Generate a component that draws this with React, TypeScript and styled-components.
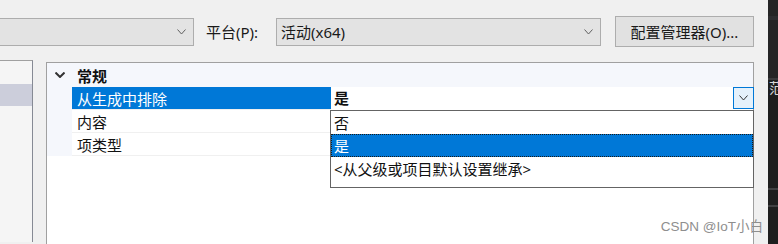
import styled, { createGlobalStyle } from "styled-components";

const GlobalStyle = createGlobalStyle`
  html, body {
    margin: 0;
    padding: 0;
  }
  body {
    background: #f0f0f0;
    font-family: "Noto Sans", "Noto Sans CJK SC", sans-serif;
    color: #1e1e1e;
  }
`;

const Screen = styled.div`
  width: 778px;
  height: 244px;
  overflow: hidden;
  display: flex;
  position: relative;
`;

const Main = styled.div`
  width: 768px;
  display: flex;
  flex-direction: column;
`;

const Toolbar = styled.div`
  height: 62px;
  box-sizing: border-box;
  padding-top: 16px;
  display: flex;
  align-items: flex-start;
`;

const Combo = styled.div<{ $width: number; $first?: boolean }>`
  width: ${(p) => p.$width}px;
  height: 28px;
  margin-top: 2px;
  margin-left: ${(p) => (p.$first ? "-1px" : "0")};
  box-sizing: border-box;
  border: 1px solid #adadad;
  background: #e3e3e3;
  display: flex;
  align-items: center;
  justify-content: space-between;
  padding: 0 7px 0 4px;
  font-size: 15px;
  line-height: 26px;
  color: #1a1a1a;
`;

const Label = styled.div`
  width: 70px;
  margin-left: 12px;
  margin-top: 2px;
  height: 28px;
  line-height: 28px;
  font-size: 15px;
  color: #1a1a1a;
`;

const Button = styled.div`
  width: 139px;
  height: 31px;
  margin-left: 14px;
  box-sizing: border-box;
  border: 1px solid #adadad;
  background: #e1e1e1;
  display: flex;
  align-items: center;
  justify-content: center;
  font-size: 15px;
  color: #1a1a1a;
`;

const Content = styled.div`
  flex: 1;
  display: flex;
  align-items: flex-start;
`;

const LeftPanel = styled.div`
  width: 33px;
  height: 182px;
  box-sizing: border-box;
  border-top: 1px solid #a0a0a0;
  border-right: 1px solid #868a94;
  background: #f5f5f5;
  padding-top: 23px;
`;

const LeftItem = styled.div`
  height: 22px;
  background: #cccedb;
`;

const Grid = styled.div`
  position: relative;
  margin-left: 13px;
  margin-top: 2px;
  width: 708px;
  height: 182px;
  box-sizing: border-box;
  border: 1px solid #a0a0a0;
  border-bottom: none;
  background: #ffffff;
`;

const CategoryRow = styled.div`
  height: 24px;
  background: #f5f7fc;
  display: flex;
  align-items: center;
  font-size: 15px;
  font-weight: 700;
  color: #111;
`;

const Expander = styled.div`
  width: 30px;
  display: flex;
  justify-content: center;
  padding-right: 4px;
  box-sizing: border-box;
`;

const Rows = styled.div`
  display: grid;
  grid-template-columns: 25px 259px 1fr;
`;

const Margin = styled.div`
  background: #f5f7fc;
  height: 23px;
`;

const NameCell = styled.div<{ $selected?: boolean }>`
  height: 23px;
  box-sizing: border-box;
  border-bottom: 1px solid #f0f0f0;
  background: #fff;
  font-size: 15px;
  line-height: 22px;
  color: #111;
  & > span {
    display: block;
    box-sizing: border-box;
    height: 22px;
    padding: 1px 0 0 5px;
    background: ${(p) => (p.$selected ? "#0078d7" : "transparent")};
    color: ${(p) => (p.$selected ? "#ffffff" : "#111")};
  }
`;

const ValueCell = styled.div<{ $bold?: boolean }>`
  height: 23px;
  box-sizing: border-box;
  display: flex;
  align-items: flex-start;
  justify-content: space-between;
  padding-left: 3px;
  font-size: 15px;
  line-height: 23px;
  font-weight: ${(p) => (p.$bold ? 700 : 400)};
  color: #111;
`;

const DropButton = styled.div`
  width: 21px;
  height: 22px;
  margin-right: -1px;
  box-sizing: border-box;
  border: 1px solid #0078d7;
  background: #e5f1fb;
  display: flex;
  align-items: center;
  justify-content: center;
`;

const DropList = styled.div`
  position: absolute;
  left: 283px;
  top: 47px;
  width: 424px;
  height: 78px;
  box-sizing: border-box;
  border: 1px solid #646464;
  background: #ffffff;
`;

const Option = styled.div<{ $selected?: boolean }>`
  height: 23px;
  box-sizing: border-box;
  padding: 1px 0 0 3px;
  font-size: 15px;
  line-height: 22px;
  background: ${(p) => (p.$selected ? "#0078d7" : "transparent")};
  color: ${(p) => (p.$selected ? "#ffffff" : "#111")};
  outline: ${(p) => (p.$selected ? "1px dotted #1a1a1a" : "none")};
  outline-offset: -1px;
`;

const Watermark = styled.div`
  position: absolute;
  right: 15px;
  top: 219px;
  font-family: "Liberation Sans", "Noto Sans CJK SC", sans-serif;
  font-size: 13.5px;
  line-height: 16px;
  color: #8e8e8e;
`;

const Strip = styled.div`
  width: 10px;
  background: #1e1e1e;
  display: flex;
  flex-direction: column;
`;

const StripBlock = styled.div<{ $h: number; $bg: string }>`
  height: ${(p) => p.$h}px;
  background: ${(p) => p.$bg};
  flex-shrink: 0;
  overflow: hidden;
  color: #d8d8d8;
  font-size: 14px;
  line-height: 16px;
  white-space: nowrap;
`;

const Chevron = ({ color = "#606060", w = 9, stroke = 1 }: { color?: string; w?: number; stroke?: number }) => (
  <svg width={w} height={Math.round(w / 2) + 1} viewBox={`0 0 ${w} ${Math.round(w / 2) + 1}`}>
    <polyline
      points={`0.5,0.5 ${w / 2},${Math.round(w / 2)} ${w - 0.5},0.5`}
      fill="none"
      stroke={color}
      strokeWidth={stroke}
    />
  </svg>
);

export default function App() {
  return (
    <>
      <GlobalStyle />
      <Screen>
        <Main>
          <Toolbar>
            <Combo $width={195} $first>
              <span />
              <Chevron />
            </Combo>
            <Label>平台(P):</Label>
            <Combo $width={325}>
              <span>活动(x64)</span>
              <Chevron />
            </Combo>
            <Button>配置管理器(O)...</Button>
          </Toolbar>
          <Content>
            <LeftPanel>
              <LeftItem />
            </LeftPanel>
            <Grid>
              <CategoryRow>
                <Expander>
                  <Chevron color="#333" w={10} stroke={2} />
                </Expander>
                常规
              </CategoryRow>
              <Rows>
                <Margin />
                <NameCell $selected>
                  <span>从生成中排除</span>
                </NameCell>
                <ValueCell $bold>
                  <span>是</span>
                  <DropButton>
                    <Chevron color="#333" w={9} />
                  </DropButton>
                </ValueCell>
                <Margin />
                <NameCell>
                  <span>内容</span>
                </NameCell>
                <ValueCell />
                <Margin />
                <NameCell>
                  <span>项类型</span>
                </NameCell>
                <ValueCell />
              </Rows>
              <DropList>
                <Option>否</Option>
                <Option $selected>是</Option>
                <Option>&lt;从父级或项目默认设置继承&gt;</Option>
              </DropList>
            </Grid>
          </Content>
        </Main>
        <Strip>
          <StripBlock $h={16} $bg="#252526" />
          <StripBlock $h={4} $bg="#2d2d30" />
          <StripBlock $h={58} $bg="#252526" />
          <StripBlock $h={2} $bg="#3a3a3c" />
          <StripBlock $h={20} $bg="#1e1e1e">
            <span style={{ marginLeft: 1 }}>范</span>
          </StripBlock>
          <StripBlock $h={88} $bg="#1e1e1e" />
          <StripBlock $h={2} $bg="#404042" />
          <StripBlock $h={15} $bg="#1e1e1e" />
          <StripBlock $h={2} $bg="#404042" />
          <StripBlock $h={37} $bg="#1e1e1e" />
        </Strip>
        <Watermark>CSDN @IoT小白</Watermark>
      </Screen>
    </>
  );
}
